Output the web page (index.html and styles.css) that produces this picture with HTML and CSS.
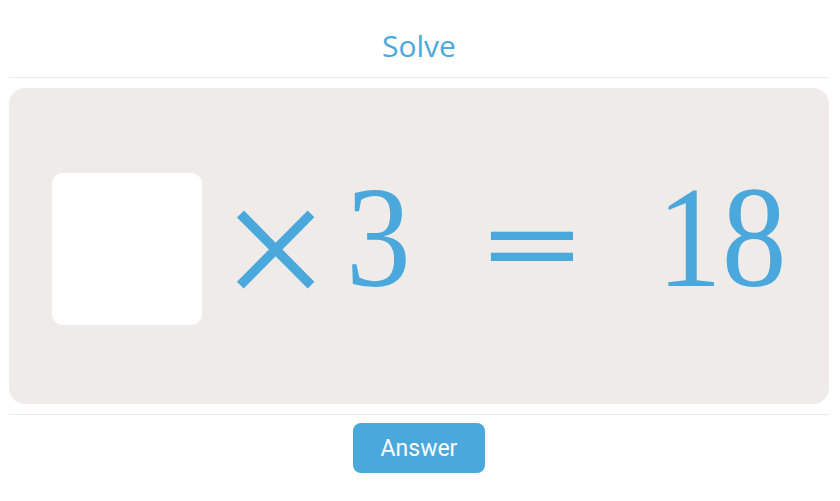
FILE: index.html
```html
<!DOCTYPE html>
<html>
<head>
<meta charset="utf-8">
<link rel="stylesheet" href="styles.css">
</head>
<body>
<div class="page">
  <header class="header"><h1 class="title">Solve</h1></header>
  <section class="board">
    <div class="blank"></div>
    <span class="sym times">×</span>
    <span class="sym num three">3</span>
    <span class="sym eq">=</span>
    <span class="sym num result">18</span>
  </section>
  <footer class="footer"><button class="answer">Answer</button></footer>
</div>
</body>
</html>
```
FILE: styles.css
```css
html, body { margin: 0; padding: 0; background: #ffffff; }
.page { width: 820px; margin-left: 9px; }
.header {
  height: 78px;
  border-bottom: 1px solid #ebebeb;
  display: flex;
  align-items: center;
  justify-content: center;
  padding-top: 13px;
  box-sizing: border-box;
}
.title {
  margin: 0;
  font-family: "Open Sans", "Noto Sans", sans-serif;
  font-weight: 400;
  font-size: 30px;
  color: #4aa8dc;
}
.board {
  margin-top: 10px;
  height: 316px;
  background: #efebe8;
  border-radius: 16px;
  display: flex;
  align-items: center;
  padding-left: 43px;
  box-sizing: border-box;
}
.blank {
  width: 150px;
  height: 152px;
  background: #ffffff;
  border-radius: 11px;
  margin-top: 6px;
  flex: none;
}
.sym {
  font-family: "Liberation Serif", "Times New Roman", serif;
  line-height: 1;
  color: #4aa8dc;
  flex: none;
}
.num {
  font-size: 144px;
  margin-top: -17px;
  transform: scaleX(0.9);
  transform-origin: left center;
}
.times { font-size: 190px; margin-left: 20px; margin-top: 5px; }
.three { margin-left: 17px; }
.eq {
  font-family: "DejaVu Serif", serif;
  font-size: 114px;
  margin-left: 59px;
  margin-top: -4px;
  transform: scale(1.15, 0.93);
  transform-origin: left center;
}
.result { margin-left: 84px; }
.footer {
  margin-top: 10px;
  border-top: 1px solid #ebebeb;
  display: flex;
  justify-content: center;
  padding-top: 8px;
}
.answer {
  width: 132px;
  height: 50px;
  border: none;
  border-radius: 8px;
  background: #4aa8dc;
  color: #ffffff;
  font-family: Roboto, "Liberation Sans", sans-serif;
  font-size: 23px;
  padding: 0;
}
```
